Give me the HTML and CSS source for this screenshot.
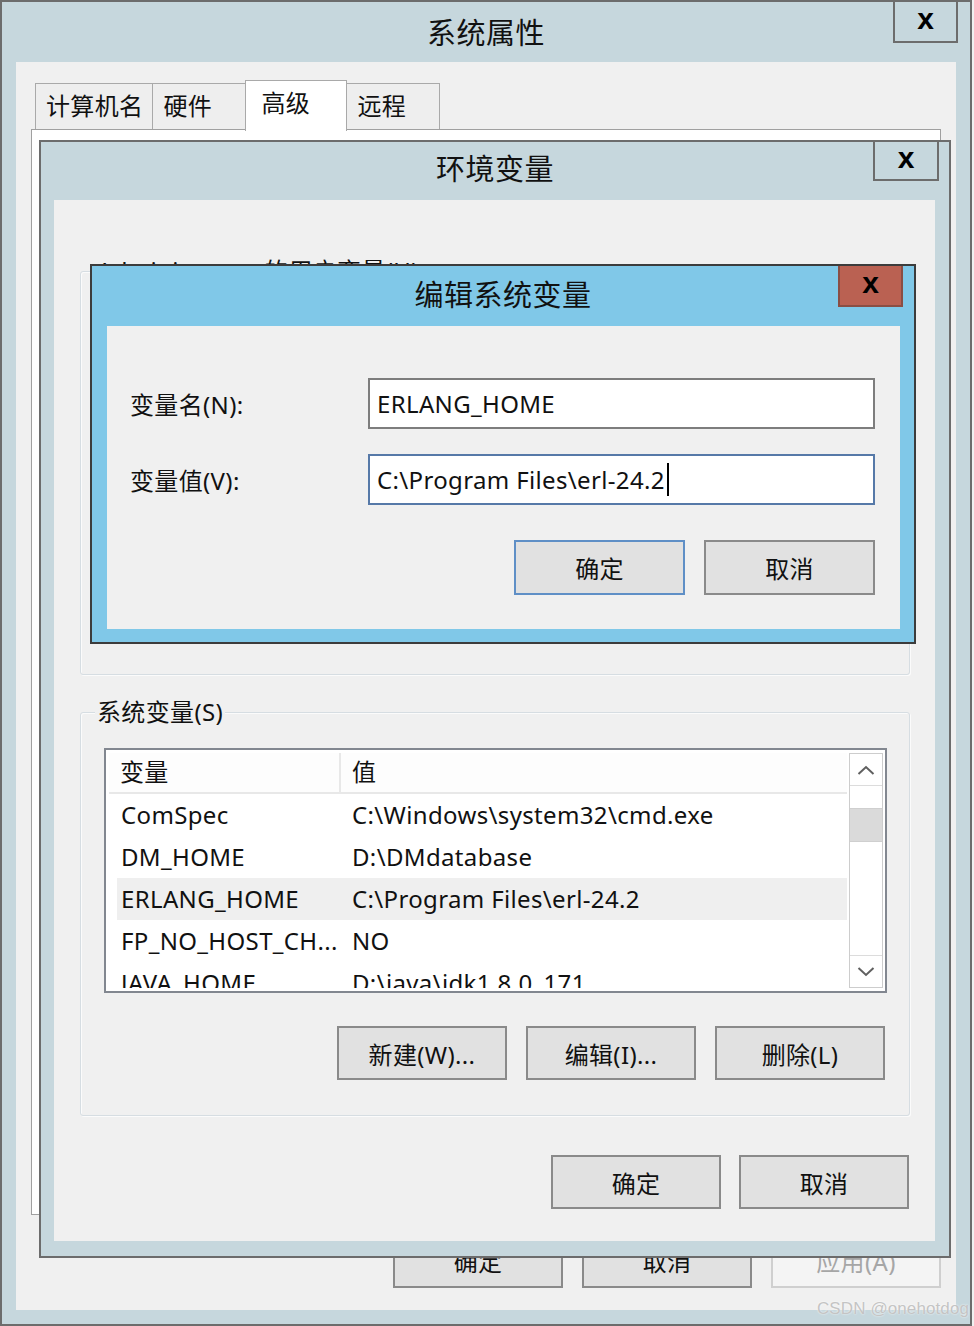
FILE: index.html
```html
<!DOCTYPE html>
<html lang="zh-CN">
<head>
<meta charset="utf-8">
<title>系统属性 - 环境变量</title>
<link rel="stylesheet" href="styles.css">
</head>
<body>
  <section class="window win-sys">
    <header class="titlebar tb-sys">
      <h1 class="title">系统属性</h1>
      <div class="close close-sys">x</div>
    </header>
    <div class="client sys-client">
      <nav class="tabs">
        <div class="tab">计算机名</div>
        <div class="tab">硬件</div>
        <div class="tab tab-active">高级</div>
        <div class="tab">远程</div>
      </nav>
      <div class="tabpanel"></div>
      <div class="btn-row sys-btns">
        <div class="btn">确定</div>
        <div class="btn">取消</div>
        <div class="btn btn-disabled">应用(A)</div>
      </div>
    </div>
  </section>

  <section class="window win-env">
    <header class="titlebar tb-env">
      <h1 class="title">环境变量</h1>
      <div class="close close-env">x</div>
    </header>
    <div class="client env-client">
      <div class="group group-user">
        <div class="group-title">Administrator 的用户变量(U)</div>
      </div>
      <div class="group group-sys">
        <div class="group-title">系统变量(S)</div>
        <div class="listview">
          <div class="list-main">
            <div class="list-header">
              <div class="hcell hcell-name">变量</div>
              <div class="hcell">值</div>
            </div>
            <div class="list-row"><span class="cell">ComSpec</span><span class="cell">C:\Windows\system32\cmd.exe</span></div>
            <div class="list-row"><span class="cell">DM_HOME</span><span class="cell">D:\DMdatabase</span></div>
            <div class="list-row list-row-sel"><span class="cell">ERLANG_HOME</span><span class="cell">C:\Program Files\erl-24.2</span></div>
            <div class="list-row"><span class="cell">FP_NO_HOST_CH...</span><span class="cell">NO</span></div>
            <div class="list-row"><span class="cell">JAVA_HOME</span><span class="cell">D:\java\jdk1.8.0_171</span></div>
          </div>
          <div class="scrollbar">
            <div class="sb-btn sb-up">
              <svg width="18" height="10" viewBox="0 0 18 10"><polyline points="1.5,9 9,2 16.5,9" fill="none" stroke="#606060" stroke-width="2"/></svg>
            </div>
            <div class="sb-track"><div class="sb-thumb"></div></div>
            <div class="sb-btn sb-down">
              <svg width="18" height="10" viewBox="0 0 18 10"><polyline points="1.5,1 9,8 16.5,1" fill="none" stroke="#606060" stroke-width="2"/></svg>
            </div>
          </div>
        </div>
        <div class="btn-row group-btns">
          <div class="btn">新建(W)...</div>
          <div class="btn">编辑(I)...</div>
          <div class="btn">删除(L)</div>
        </div>
      </div>
      <div class="btn-row env-btns">
        <div class="btn">确定</div>
        <div class="btn">取消</div>
      </div>
    </div>
  </section>

  <section class="window win-edit">
    <header class="titlebar tb-edit">
      <h1 class="title">编辑系统变量</h1>
      <div class="close close-edit">x</div>
    </header>
    <div class="client edit-client">
      <div class="form">
        <label class="form-label">变量名(N):</label>
        <div class="input">ERLANG_HOME</div>
        <label class="form-label">变量值(V):</label>
        <div class="input input-focus">C:\Program Files\erl-24.2<span class="caret"></span></div>
      </div>
      <div class="btn-row edit-btns">
        <div class="btn btn-default">确定</div>
        <div class="btn">取消</div>
      </div>
    </div>
  </section>

  <div class="watermark">CSDN @onehotdog</div>
</body>
</html>
```

FILE: styles.css
```css
* { box-sizing: border-box; }
html, body { margin: 0; padding: 0; }
body {
  position: relative;
  width: 974px;
  height: 1326px;
  overflow: hidden;
  background: #f0f0f0;
  color: #111;
  font-family: "Noto Sans", "Noto Sans CJK SC", sans-serif;
  font-size: 24px;
  letter-spacing: 0.35px;
}

/* ---------- windows ---------- */
.window {
  position: absolute;
  display: flex;
  flex-direction: column;
  border: 2px solid #6c6c6c;
  background: #c6d7dd;
}
.win-sys { left: 0; top: 0; width: 972px; height: 1326px; }
.win-env { left: 39px; top: 140px; width: 912px; height: 1118px; }
.win-edit { left: 90px; top: 264px; width: 826px; height: 380px; border-color: #3c3c3c; background: #80c8e8; }

.titlebar {
  display: grid;
  grid-template-columns: 1fr auto 1fr;
  align-items: start;
  flex: none;
}
.title {
  grid-column: 2;
  margin: 0;
  font-weight: normal;
  font-size: 29px;
  letter-spacing: 0.5px;
  white-space: nowrap;
}
.close {
  grid-column: 3;
  justify-self: end;
  display: flex;
  align-items: center;
  justify-content: center;
  border: 2px solid #6c6c6c;
  border-top: none;
  font-family: "Liberation Sans", Arial, sans-serif;
  font-weight: bold;
  font-size: 30px;
  letter-spacing: 0;
  line-height: 1;
  padding-bottom: 6px;
  color: #000;
}

.tb-sys { height: 60px; }
.tb-sys .title { line-height: 62px; }
.close-sys { width: 65px; height: 41px; margin-right: 12px; }

.tb-env { height: 58px; }
.tb-env .title { line-height: 54px; }
.close-env { width: 66px; height: 39px; margin-right: 10px; }

.tb-edit { height: 60px; }
.tb-edit .title { line-height: 58px; }
.close-edit { width: 65px; height: 41px; margin-right: 11px; background: #ba6152; border-color: #8a4e44; }

.client { background: #f0f0f0; flex: 1; display: flex; flex-direction: column; }

/* ---------- system properties ---------- */
.sys-client { margin: 0 14px 14px 14px; padding: 18px 15px 22px 15px; }
.tabs { display: flex; align-items: flex-end; padding-left: 4px; height: 51px; position: relative; z-index: 1; }
.tab {
  min-width: 94px;
  height: 46px;
  padding: 0 9px 0 10px;
  border: 1.5px solid #a9a9a9;
  border-bottom: none;
  background: #eeeeee;
  line-height: 44px;
  white-space: nowrap;
  margin-bottom: 2px;
}
.tab + .tab { margin-left: -1px; }
.tab-active {
  min-width: 102px;
  height: 51px;
  padding-left: 15px;
  background: #ffffff;
  line-height: 44px;
  margin-bottom: 0;
}
.tabpanel { flex: 1; margin-top: -2px; background: #fff; border: 1.5px solid #a0a0a0; }

.btn-row { display: flex; justify-content: flex-end; gap: 19px; flex: none; }
.btn {
  width: 170px;
  height: 55px;
  display: flex;
  align-items: center;
  justify-content: center;
  background: #e1e1e1;
  border: 2px solid #8a8a8a;
  white-space: nowrap;
}
.btn-disabled { background: #f4f4f4; border-color: #cfcfcf; color: #a6a6a6; }
.btn-default { border-color: #5f8fc6; }
.sys-btns { margin-top: 18px; }

/* ---------- environment variables ---------- */
.env-client { margin: 0 14px 15px 13px; padding: 0 25px 0 26px; }
.group {
  border: 1px solid #d6dde2;
  border-radius: 3px;
  box-shadow: inset 1px 1px 0 #fbfbfb, 1px 1px 0 #fbfbfb;
}
.group-title {
  width: fit-content;
  margin: -15px 0 0 14px;
  padding: 0 2px;
  background: #f0f0f0;
  line-height: 28px;
  white-space: nowrap;
}
.group-user { margin-top: 71px; height: 404px; }
.group-sys { margin-top: 37px; padding: 0 22px 35px 23px; }
.group-sys .group-title { margin-left: -9px; }

.listview {
  margin-top: 22px;
  height: 245px;
  border: 2px solid #828790;
  background: #fff;
  padding: 3px 2px 3px 3px;
  display: grid;
  grid-template-columns: 1fr 34px;
  gap: 2px;
}
.list-main { overflow: hidden; }
.list-header {
  display: grid;
  grid-template-columns: 232px 1fr;
  height: 41px;
  border-bottom: 2px solid #e8e8e8;
  background: #fdfdfd;
}
.hcell { padding-left: 11px; line-height: 38px; }
.hcell-name { border-right: 2px solid #e8e8e8; }
.list-row {
  display: grid;
  grid-template-columns: 231px 1fr;
  height: 42px;
  margin-left: 8px;
  line-height: 42px;
  white-space: nowrap;
}
.list-row-sel { background: #efefef; }
.cell { padding-left: 4px; overflow: hidden; }

.scrollbar {
  display: flex;
  flex-direction: column;
  border: 1px solid #cdcdcd;
  background: #fff;
}
.sb-btn { height: 32px; display: flex; align-items: center; justify-content: center; flex: none; }
.sb-up { border-bottom: 1px solid #dcdcdc; }
.sb-down { border-top: 1px solid #dcdcdc; }
.sb-track { flex: 1; padding-top: 22px; }
.sb-thumb { height: 34px; background: #dadada; border-top: 1px solid #cfcfcf; border-bottom: 1px solid #cfcfcf; }

.group-btns { margin-top: 33px; gap: 19px; margin-right: 2px; }
.group-btns .btn { height: 54px; }
.env-btns { margin-top: 39px; gap: 18px; margin-right: 1px; }
.env-btns .btn { height: 54px; }

/* ---------- edit dialog ---------- */
.edit-client { margin: 0 14px 13px 15px; padding: 52px 25px 0 23px; }
.form {
  display: grid;
  grid-template-columns: 238px 507px;
  grid-auto-rows: 51px;
  row-gap: 25px;
  align-items: center;
}
.form-label { white-space: nowrap; }
.input {
  height: 51px;
  border: 2px solid #7d7d7d;
  background: #fff;
  padding-left: 7px;
  line-height: 45px;
  white-space: nowrap;
  display: flex;
  align-items: center;
}
.input-focus { border-color: #5679a8; }
.caret { display: inline-block; width: 2px; height: 33px; background: #000; margin-left: 2px; }
.edit-btns { margin-top: 35px; }
.edit-btns .btn { width: 171px; }

/* ---------- watermark ---------- */
.watermark {
  position: absolute;
  right: 5px;
  bottom: 7px;
  font-family: "Liberation Sans", Arial, sans-serif;
  font-size: 17px;
  color: #c4c4c4;
  text-shadow: 0 0 2px #fff;
  letter-spacing: 0.1px;
}
```
